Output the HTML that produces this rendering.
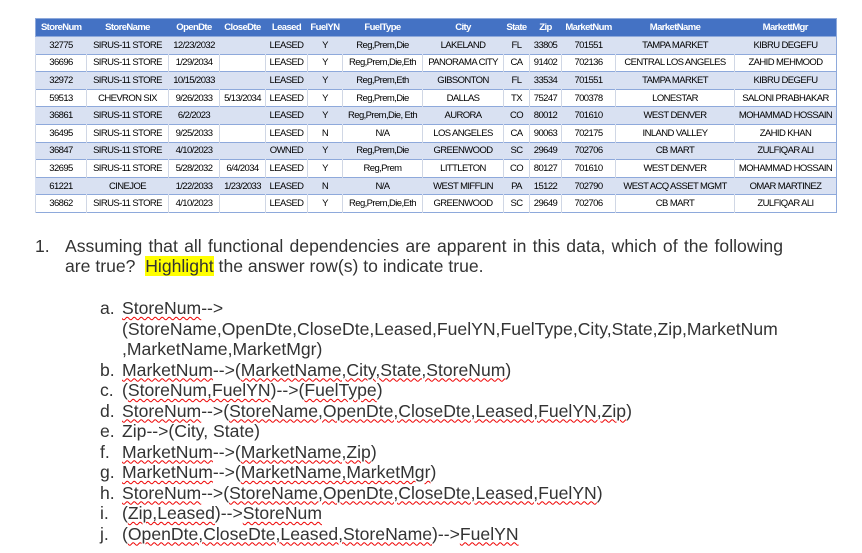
<!DOCTYPE html>
<html><head><style>
body{margin:0;background:#fff;width:862px;height:553px;overflow:hidden;font-family:"Liberation Sans",Arial,sans-serif;position:relative}
table{position:absolute;left:35px;top:18px;border-collapse:collapse;table-layout:fixed;width:801px;font-size:9.5px;letter-spacing:-0.6px}
td,th{height:16.6px;padding:0;text-align:center;white-space:nowrap;overflow:hidden;border-top:1px solid #8EA9DB;border-left:1px solid #fff;color:#000}
th{background:#4472C4;color:#fff;font-weight:bold;border:none;height:17px}
tr:nth-child(even) td{background:#D9E1F2;border-left:1px solid #D9E1F2}
tr:nth-child(odd) td{background:#fff;border-left:1px solid #d0d7e5}
table{border:1px solid #8EA9DB}
.q{position:absolute;left:35px;top:236px;font-size:17.6px;color:#333;line-height:20px}
.q .n{position:absolute;left:0;top:0}
.q .t{position:absolute;left:30px;top:0;width:718px;text-align:justify;text-align-last:left}
.hl{background:#ffff00}
ol{position:absolute;left:100px;top:298px;margin:0;padding:0;list-style:none;font-size:17.6px;color:#333;line-height:20.5px}
li{position:relative;padding-left:22px}
li b{font-weight:normal;position:absolute;left:0}
u{text-decoration:underline wavy #e00;text-decoration-thickness:1px;text-underline-offset:2px}
</style></head><body>
<table>
<colgroup><col style="width:51px"><col style="width:82px"><col style="width:51px"><col style="width:46px"><col style="width:42px"><col style="width:35px"><col style="width:80px"><col style="width:81px"><col style="width:26px"><col style="width:32px"><col style="width:54px"><col style="width:119px"><col style="width:102px"></colgroup>
<tr><th>StoreNum</th><th>StoreName</th><th>OpenDte</th><th>CloseDte</th><th>Leased</th><th>FuelYN</th><th>FuelType</th><th>City</th><th>State</th><th>Zip</th><th>MarketNum</th><th>MarketName</th><th>MarkettMgr</th></tr>
<tr><td>32775</td><td>SIRUS-11 STORE</td><td>12/23/2032</td><td></td><td>LEASED</td><td>Y</td><td>Reg,Prem,Die</td><td>LAKELAND</td><td>FL</td><td>33805</td><td>701551</td><td>TAMPA MARKET</td><td>KIBRU DEGEFU</td></tr>
<tr><td>36696</td><td>SIRUS-11 STORE</td><td>1/29/2034</td><td></td><td>LEASED</td><td>Y</td><td>Reg,Prem,Die,Eth</td><td>PANORAMA CITY</td><td>CA</td><td>91402</td><td>702136</td><td>CENTRAL LOS ANGELES</td><td>ZAHID MEHMOOD</td></tr>
<tr><td>32972</td><td>SIRUS-11 STORE</td><td>10/15/2033</td><td></td><td>LEASED</td><td>Y</td><td>Reg,Prem,Eth</td><td>GIBSONTON</td><td>FL</td><td>33534</td><td>701551</td><td>TAMPA MARKET</td><td>KIBRU DEGEFU</td></tr>
<tr><td>59513</td><td>CHEVRON SIX</td><td>9/26/2033</td><td>5/13/2034</td><td>LEASED</td><td>Y</td><td>Reg,Prem,Die</td><td>DALLAS</td><td>TX</td><td>75247</td><td>700378</td><td>LONESTAR</td><td>SALONI PRABHAKAR</td></tr>
<tr><td>36861</td><td>SIRUS-11 STORE</td><td>6/2/2023</td><td></td><td>LEASED</td><td>Y</td><td>Reg,Prem,Die, Eth</td><td>AURORA</td><td>CO</td><td>80012</td><td>701610</td><td>WEST DENVER</td><td>MOHAMMAD HOSSAIN</td></tr>
<tr><td>36495</td><td>SIRUS-11 STORE</td><td>9/25/2033</td><td></td><td>LEASED</td><td>N</td><td>N/A</td><td>LOS ANGELES</td><td>CA</td><td>90063</td><td>702175</td><td>INLAND VALLEY</td><td>ZAHID KHAN</td></tr>
<tr><td>36847</td><td>SIRUS-11 STORE</td><td>4/10/2023</td><td></td><td>OWNED</td><td>Y</td><td>Reg,Prem,Die</td><td>GREENWOOD</td><td>SC</td><td>29649</td><td>702706</td><td>CB MART</td><td>ZULFIQAR ALI</td></tr>
<tr><td>32695</td><td>SIRUS-11 STORE</td><td>5/28/2032</td><td>6/4/2034</td><td>LEASED</td><td>Y</td><td>Reg,Prem</td><td>LITTLETON</td><td>CO</td><td>80127</td><td>701610</td><td>WEST DENVER</td><td>MOHAMMAD HOSSAIN</td></tr>
<tr><td>61221</td><td>CINEJOE</td><td>1/22/2033</td><td>1/23/2033</td><td>LEASED</td><td>N</td><td>N/A</td><td>WEST MIFFLIN</td><td>PA</td><td>15122</td><td>702790</td><td>WEST ACQ ASSET MGMT</td><td>OMAR MARTINEZ</td></tr>
<tr><td>36862</td><td>SIRUS-11 STORE</td><td>4/10/2023</td><td></td><td>LEASED</td><td>Y</td><td>Reg,Prem,Die,Eth</td><td>GREENWOOD</td><td>SC</td><td>29649</td><td>702706</td><td>CB MART</td><td>ZULFIQAR ALI</td></tr>
</table>
<div class="q"><span class="n">1.</span><div class="t">Assuming that all functional dependencies are apparent in this data, which of the following are true?&nbsp; <span class="hl">Highlight</span> the answer row(s) to indicate true.</div></div>
<ol>
<li><b>a.</b><u>StoreNum</u>--&gt;<br>(StoreName,OpenDte,CloseDte,Leased,FuelYN,FuelType,City,State,Zip,MarketNum<br>,MarketName,MarketMgr)</li>
<li><b>b.</b><u>MarketNum</u>--&gt;(<u>MarketName,City,State,StoreNum</u>)</li>
<li><b>c.</b>(<u>StoreNum,FuelYN</u>)--&gt;(<u>FuelType</u>)</li>
<li><b>d.</b><u>StoreNum</u>--&gt;(<u>StoreName,OpenDte,CloseDte,Leased,FuelYN,Zip</u>)</li>
<li><b>e.</b>Zip--&gt;(City, State)</li>
<li><b>f.</b><u>MarketNum</u>--&gt;(<u>MarketName,Zip</u>)</li>
<li><b>g.</b><u>MarketNum</u>--&gt;(<u>MarketName,MarketMgr</u>)</li>
<li><b>h.</b><u>StoreNum</u>--&gt;(<u>StoreName,OpenDte,CloseDte,Leased,FuelYN</u>)</li>
<li><b>i.</b>(<u>Zip,Leased</u>)--&gt;<u>StoreNum</u></li>
<li><b>j.</b>(<u>OpenDte,CloseDte,Leased,StoreName</u>)--&gt;<u>FuelYN</u></li>
</ol>
</body></html>
